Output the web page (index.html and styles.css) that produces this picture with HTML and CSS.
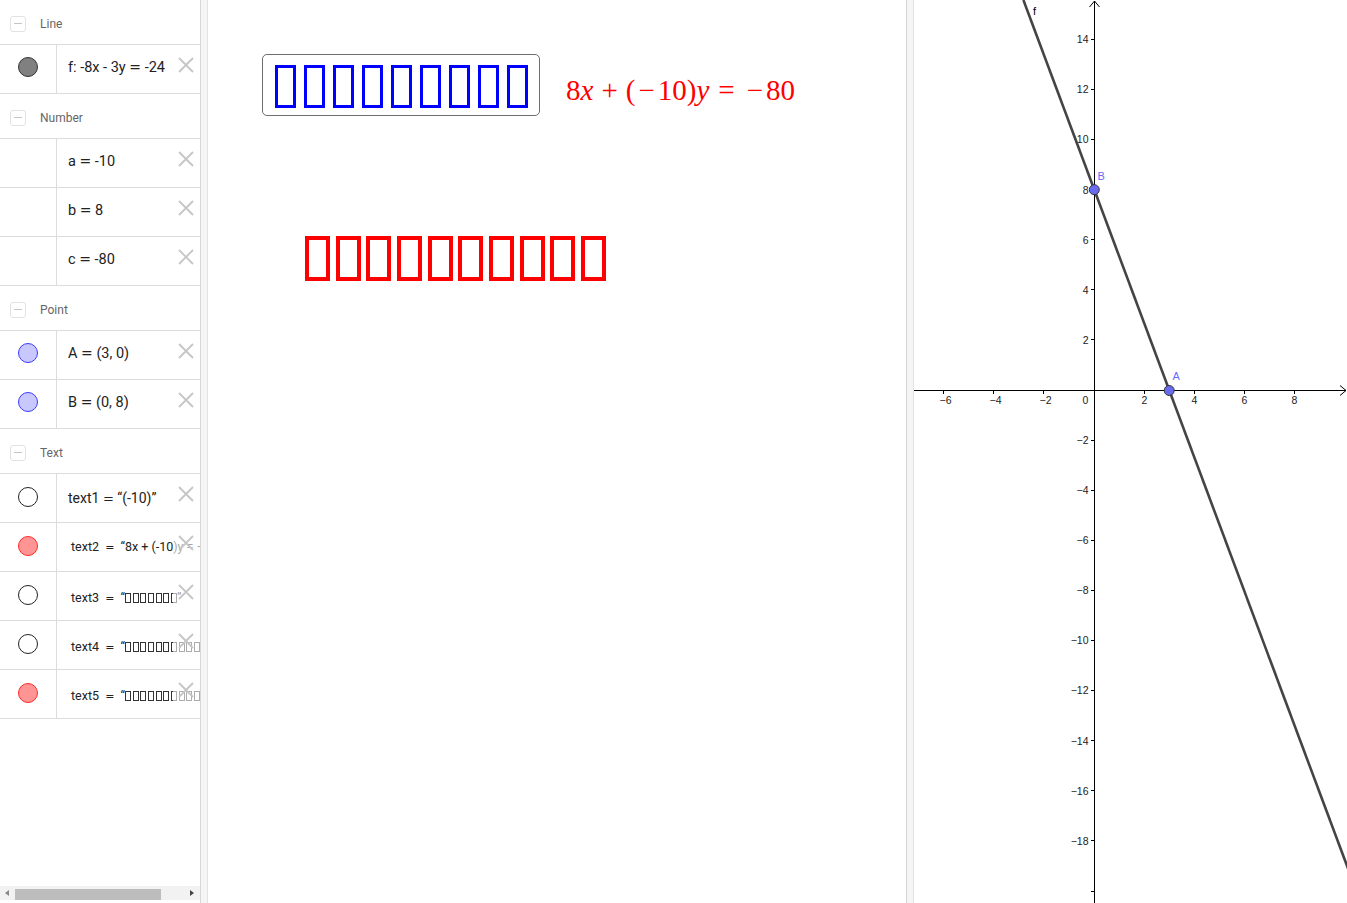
FILE: index.html
```html
<!DOCTYPE html>
<html>
<head>
<meta charset="utf-8">
<link rel="stylesheet" href="styles.css">
</head>
<body>
<div class="app">
  <aside class="algebra">
    <div class="list">
      <div class="group-head"><span class="collapse"></span><span class="group-name">Line</span></div>
      <div class="item">
        <div class="marker"><span class="dot dot-line"></span></div>
        <div class="expr">f: -8x - 3y <span class="eq">=</span> -24</div>
        <span class="del"><svg viewBox="0 0 16 16"><path d="M1 1L15 15M15 1L1 15"/></svg></span>
      </div>

      <div class="group-head"><span class="collapse"></span><span class="group-name">Number</span></div>
      <div class="item">
        <div class="marker"></div>
        <div class="expr">a <span class="eq">=</span> -10</div>
        <span class="del"><svg viewBox="0 0 16 16"><path d="M1 1L15 15M15 1L1 15"/></svg></span>
      </div>
      <div class="item">
        <div class="marker"></div>
        <div class="expr">b <span class="eq">=</span> 8</div>
        <span class="del"><svg viewBox="0 0 16 16"><path d="M1 1L15 15M15 1L1 15"/></svg></span>
      </div>
      <div class="item">
        <div class="marker"></div>
        <div class="expr">c <span class="eq">=</span> -80</div>
        <span class="del"><svg viewBox="0 0 16 16"><path d="M1 1L15 15M15 1L1 15"/></svg></span>
      </div>

      <div class="group-head"><span class="collapse"></span><span class="group-name">Point</span></div>
      <div class="item">
        <div class="marker"><span class="dot dot-point"></span></div>
        <div class="expr">A <span class="eq">=</span> (3, 0)</div>
        <span class="del"><svg viewBox="0 0 16 16"><path d="M1 1L15 15M15 1L1 15"/></svg></span>
      </div>
      <div class="item">
        <div class="marker"><span class="dot dot-point"></span></div>
        <div class="expr">B <span class="eq">=</span> (0, 8)</div>
        <span class="del"><svg viewBox="0 0 16 16"><path d="M1 1L15 15M15 1L1 15"/></svg></span>
      </div>

      <div class="group-head"><span class="collapse"></span><span class="group-name">Text</span></div>
      <div class="item item-text">
        <div class="marker"><span class="dot dot-white"></span></div>
        <div class="expr expr-t1">text1 <span class="eq">=</span> “(-10)”</div>
        <span class="del"><svg viewBox="0 0 16 16"><path d="M1 1L15 15M15 1L1 15"/></svg></span>
      </div>
      <div class="item item-text">
        <div class="marker"><span class="dot dot-red"></span></div>
        <div class="expr expr-small">text2 <span class="eq">=</span> “8x + (-10)y = −80”</div>
        <span class="del"><svg viewBox="0 0 16 16"><path d="M1 1L15 15M15 1L1 15"/></svg></span>
      </div>
      <div class="item item-text">
        <div class="marker"><span class="dot dot-white"></span></div>
        <div class="expr expr-small expr-tofu">text3 <span class="eq">=</span> “<span class="tofus"><i></i><i></i><i></i><i></i><i></i><i></i><i></i></span>”</div>
        <span class="del"><svg viewBox="0 0 16 16"><path d="M1 1L15 15M15 1L1 15"/></svg></span>
      </div>
      <div class="item item-text">
        <div class="marker"><span class="dot dot-white"></span></div>
        <div class="expr expr-small expr-tofu">text4 <span class="eq">=</span> “<span class="tofus"><i></i><i></i><i></i><i></i><i></i><i></i><i></i><i></i><i></i><i></i><i></i><i></i></span>”</div>
        <span class="del"><svg viewBox="0 0 16 16"><path d="M1 1L15 15M15 1L1 15"/></svg></span>
      </div>
      <div class="item item-text">
        <div class="marker"><span class="dot dot-red"></span></div>
        <div class="expr expr-small expr-tofu">text5 <span class="eq">=</span> “<span class="tofus"><i></i><i></i><i></i><i></i><i></i><i></i><i></i><i></i><i></i><i></i><i></i><i></i></span>”</div>
        <span class="del"><svg viewBox="0 0 16 16"><path d="M1 1L15 15M15 1L1 15"/></svg></span>
      </div>
    </div>
    <div class="hscroll">
      <span class="arrow arrow-left"></span>
      <span class="thumb"></span>
      <span class="track-rest"></span>
      <span class="arrow arrow-right"></span>
    </div>
  </aside>

  <div class="split"></div>

  <main class="graphics">
    <div class="row1">
      <div class="tbox">
        <span class="tofu-b"></span><span class="tofu-b"></span><span class="tofu-b"></span>
        <span class="tofu-b"></span><span class="tofu-b"></span><span class="tofu-b"></span>
        <span class="tofu-b"></span><span class="tofu-b"></span><span class="tofu-b"></span>
      </div>
      <div class="math">8<i>x</i><span class="op">+</span>(<span class="mn">−</span>10)<i>y</i><span class="rel">=</span><span class="mn">−</span>80</div>
    </div>
    <div class="row2">
      <span class="tofu-r"></span><span class="tofu-r"></span><span class="tofu-r"></span><span class="tofu-r"></span><span class="tofu-r"></span>
      <span class="tofu-r"></span><span class="tofu-r"></span><span class="tofu-r"></span><span class="tofu-r"></span><span class="tofu-r"></span>
    </div>
  </main>

  <div class="split"></div>

  <section class="graph">
    <svg class="plot" viewBox="914 0 433 903" width="433" height="903">
      <g class="axes">
        <line x1="914" y1="390.5" x2="1346" y2="390.5"/>
        <polyline points="1340,385.5 1346,390.5 1340,395.5" fill="none"/>
        <line x1="1094.5" y1="903" x2="1094.5" y2="1"/>
        <polyline points="1089.5,7 1094.5,1 1099.5,7" fill="none"/>
        <line x1="943.5" y1="391" x2="943.5" y2="394"/>
        <line x1="993.5" y1="391" x2="993.5" y2="394"/>
        <line x1="1043.5" y1="391" x2="1043.5" y2="394"/>
        <line x1="1144.5" y1="391" x2="1144.5" y2="394"/>
        <line x1="1194.5" y1="391" x2="1194.5" y2="394"/>
        <line x1="1244.5" y1="391" x2="1244.5" y2="394"/>
        <line x1="1294.5" y1="391" x2="1294.5" y2="394"/>
        <line x1="1091" y1="39.5" x2="1094" y2="39.5"/>
        <line x1="1091" y1="89.5" x2="1094" y2="89.5"/>
        <line x1="1091" y1="139.5" x2="1094" y2="139.5"/>
        <line x1="1091" y1="189.5" x2="1094" y2="189.5"/>
        <line x1="1091" y1="239.5" x2="1094" y2="239.5"/>
        <line x1="1091" y1="289.5" x2="1094" y2="289.5"/>
        <line x1="1091" y1="339.5" x2="1094" y2="339.5"/>
        <line x1="1091" y1="440.5" x2="1094" y2="440.5"/>
        <line x1="1091" y1="490.5" x2="1094" y2="490.5"/>
        <line x1="1091" y1="540.5" x2="1094" y2="540.5"/>
        <line x1="1091" y1="590.5" x2="1094" y2="590.5"/>
        <line x1="1091" y1="640.5" x2="1094" y2="640.5"/>
        <line x1="1091" y1="690.5" x2="1094" y2="690.5"/>
        <line x1="1091" y1="740.5" x2="1094" y2="740.5"/>
        <line x1="1091" y1="790.5" x2="1094" y2="790.5"/>
        <line x1="1091" y1="840.5" x2="1094" y2="840.5"/>
        <line x1="1091" y1="891.5" x2="1094" y2="891.5"/>
      </g>
      <g class="xlabels">
        <text x="945.5" y="404">−6</text>
        <text x="995.5" y="404">−4</text>
        <text x="1045.5" y="404">−2</text>
        <text x="1085.5" y="404">0</text>
        <text x="1144.5" y="404">2</text>
        <text x="1194.5" y="404">4</text>
        <text x="1244.5" y="404">6</text>
        <text x="1294.5" y="404">8</text>
      </g>
      <g class="ylabels">
        <text x="1088.5" y="43">14</text>
        <text x="1088.5" y="93">12</text>
        <text x="1088.5" y="143">10</text>
        <text x="1088.5" y="193.5">8</text>
        <text x="1088.5" y="243.5">6</text>
        <text x="1088.5" y="293.5">4</text>
        <text x="1088.5" y="343.5">2</text>
        <text x="1088.5" y="444">−2</text>
        <text x="1088.5" y="494">−4</text>
        <text x="1088.5" y="544">−6</text>
        <text x="1088.5" y="594">−8</text>
        <text x="1088.5" y="644">−10</text>
        <text x="1088.5" y="694">−12</text>
        <text x="1088.5" y="744.5">−14</text>
        <text x="1088.5" y="794.5">−16</text>
        <text x="1088.5" y="844.5">−18</text>
      </g>
      <line class="fline" x1="1023.4" y1="0" x2="1360.9" y2="903"/>
      <text class="flabel" x="1033" y="15">f</text>
      <circle class="pt" cx="1169.2" cy="390.5" r="5"/>
      <circle class="pt" cx="1094.3" cy="189.7" r="5"/>
      <text class="plabel" x="1172.5" y="380">A</text>
      <text class="plabel" x="1097.5" y="180">B</text>
    </svg>
  </section>
</div>
</body>
</html>
```

FILE: styles.css
```css
* { box-sizing: border-box; }
html, body { margin: 0; padding: 0; }
body {
  background: #fff;
  font-family: Roboto, "Noto Sans", sans-serif;
  color: #222;
  overflow: hidden;
}
.app {
  display: flex;
  width: 1347px;
  height: 903px;
}

/* ---------- algebra panel ---------- */
.algebra {
  width: 200px;
  flex: none;
  display: flex;
  flex-direction: column;
}
.list { flex: 1; overflow: hidden; }
.group-head {
  height: 45px;
  border-bottom: 1px solid #dcdcdc;
  display: flex;
  align-items: center;
  padding: 3px 0 0 10px;
}
.collapse {
  position: relative;
  width: 16px;
  height: 16px;
  border: 1px solid #e2e2e2;
  border-radius: 3px;
  margin-top: 1px;
}
.collapse::after {
  content: "";
  position: absolute;
  left: 3px;
  right: 3px;
  top: 6px;
  height: 1px;
  background: #c4c4c4;
}
.group-name {
  margin-left: 14px;
  font-size: 12px;
  color: #666;
}
.item {
  position: relative;
  height: 49px;
  border-bottom: 1px solid #dcdcdc;
  display: flex;
}
.marker {
  width: 57px;
  flex: none;
  border-right: 1px solid #dcdcdc;
  padding: 12px 0 0 18px;
}
.item-text .marker { padding-top: 13px; }
.dot {
  display: block;
  width: 20px;
  height: 20px;
  border-radius: 50%;
  border: 1px solid #222;
}
.dot-line { background: #808080; border-color: #333; }
.dot-point { background: #c8c8ff; border-color: #3c3cff; }
.dot-white { background: #fff; border-color: #222; }
.dot-red { background: #ff9494; border-color: #ff2a2a; }
.expr {
  padding: 12px 0 0 11px;
  font-size: 14.5px;
  line-height: 20px;
  white-space: nowrap;
  color: #222;
}
.eq {
  font-family: "DejaVu Sans", sans-serif;
  font-size: 14px;
}
.expr-t1 { padding-top: 14px; font-size: 14px; }
.expr-t1 .eq { font-size: 13px; }
.expr-small {
  padding: 14px 0 0 14px;
  font-size: 12.5px;
}
.expr-small .eq { font-size: 11px; margin: 0 3px; }
.expr-tofu { padding-top: 16px; }
.tofus { display: inline-flex; gap: 1.7px; vertical-align: -1px; }
.tofus i {
  display: block;
  width: 6px;
  height: 10px;
  border: 1px solid #333;
}
.del {
  position: absolute;
  top: 0;
  right: 0;
  width: 27px;
  height: 48px;
  background: rgba(255, 255, 255, 0.6);
  padding: 12px 0 0 5px;
}
.del svg {
  display: block;
  width: 16px;
  height: 16px;
  fill: none;
  stroke: #c6c6c6;
  stroke-width: 1.8;
}

.hscroll {
  height: 14px;
  margin-bottom: 3px;
  background: #f2f2f2;
  display: flex;
  align-items: center;
}
.arrow { display: block; width: 0; height: 0; }
.arrow-left {
  margin-left: 5px;
  border-top: 3px solid transparent;
  border-bottom: 3px solid transparent;
  border-right: 4px solid #888;
}
.thumb {
  display: block;
  width: 146px;
  height: 11px;
  margin-left: 6px;
  margin-top: 2px;
  background: #bdbdbd;
}
.track-rest { flex: 1; }
.arrow-right {
  margin-right: 6px;
  border-top: 3px solid transparent;
  border-bottom: 3px solid transparent;
  border-left: 4px solid #444;
}

/* ---------- splitters ---------- */
.split {
  width: 8px;
  flex: none;
  background: #f5f5f5;
  border-left: 1px solid #d6d6d6;
  border-right: 1px solid #e2e2e2;
}

/* ---------- graphics view ---------- */
.graphics {
  width: 698px;
  flex: none;
  padding: 54px 0 0 54px;
}
.row1 {
  display: flex;
  align-items: flex-start;
}
.tbox {
  display: flex;
  gap: 8px;
  border: 1px solid #6e6e6e;
  border-radius: 5px;
  padding: 10px 11px 7px 12px;
}
.tofu-b {
  display: block;
  width: 21px;
  height: 43px;
  border: 3px solid #0000ff;
}
.math {
  margin-left: 26px;
  margin-top: 19px;
  font-family: "Liberation Serif", serif;
  font-size: 29px;
  line-height: 34px;
  color: #ff0000;
  white-space: nowrap;
}
.math i { font-style: italic; }
.math .op { margin: 0 8px; }
.math .rel { margin: 0 9px; }
.math .mn { padding: 0 3px; }
.row2 {
  display: flex;
  gap: 5.67px;
  margin: 120px 0 0 43px;
}
.tofu-r {
  display: block;
  width: 25px;
  height: 45px;
  border: 4px solid #ff0000;
}

/* ---------- graph ---------- */
.graph {
  flex: 1;
  overflow: hidden;
}
.plot { display: block; }
.axes line, .axes polyline {
  stroke: #000;
  stroke-width: 1;
}
.xlabels text, .ylabels text {
  font-family: "Liberation Sans", Arial, sans-serif;
  font-size: 10.5px;
  fill: #222;
}
.xlabels text { text-anchor: middle; }
.ylabels text { text-anchor: end; }
.fline {
  stroke: #444;
  stroke-width: 2.6;
}
.flabel {
  font-family: "Liberation Sans", Arial, sans-serif;
  font-size: 11px;
  fill: #000;
}
.pt {
  fill: #6a6aee;
  stroke: #333;
  stroke-width: 1;
}
.plabel {
  font-family: "Liberation Sans", Arial, sans-serif;
  font-size: 11px;
  fill: #6a6aff;
}
```
